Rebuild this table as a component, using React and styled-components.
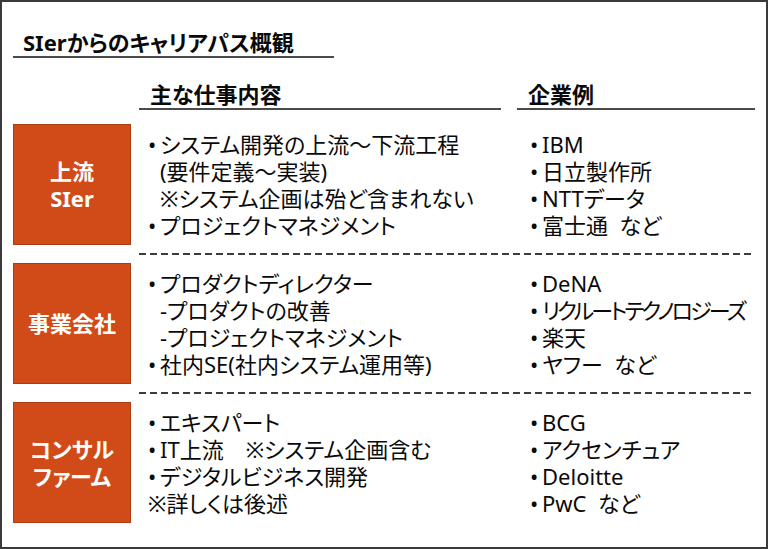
import React from 'react';
import styled, { createGlobalStyle } from 'styled-components';

const GlobalStyle = createGlobalStyle`
  html, body {
    margin: 0;
    padding: 0;
    background: #fff;
  }
  body {
    font-family: "Noto Sans", "Noto Sans CJK JP", sans-serif;
    color: #0a0a0a;
  }
`

const Frame = styled.div`
  width: 768px;
  height: 549px;
  box-sizing: border-box;
  border: 2px solid #3a3a3a;
  padding: 26px 0 0 11px;
  font-feature-settings: "palt";
`
const Title = styled.h1`
  margin: 0;
  width: 321px;
  box-sizing: border-box;
  padding-left: 10px;
  border-bottom: 2px solid #4a4a4a;
  font-size: 22px;
  font-weight: 700;
  line-height: 28px;
  white-space: nowrap;
`
const HeaderRow = styled.div`
  display: grid;
  grid-template-columns: 362px 238px;
  column-gap: 16px;
  margin: 23px 0 14px 126px;
`
const HeaderCell = styled.div`
  padding-left: 11px;
  border-bottom: 2px solid #4a4a4a;
  font-size: 22px;
  font-weight: 700;
  line-height: 27px;
`
const Row = styled.section`
  display: grid;
  grid-template-columns: 118px 362px 238px;
  column-gap: 8px;
  height: 121px;
  & > div:last-child {
    margin-left: 8px;
  }
`
const Label = styled.div`
  box-sizing: border-box;
  border: 1px solid #a93c12;
  background: #d14b18;
  color: #fff;
  display: flex;
  flex-direction: column;
  align-items: center;
  justify-content: center;
  text-align: center;
  font-size: 22px;
  font-weight: 700;
  line-height: 27px;
`
const List = styled.div`
  display: flex;
  flex-direction: column;
  justify-content: center;
  padding-left: ${p => p.$pad}px;
  font-size: 22px;
  line-height: 27px;
  white-space: pre;
`
const Line = styled.div`
  display: flex;
  padding-left: ${p => (p.$indent ? 12 : 0)}px;
  letter-spacing: ${p => (p.$tight ? '-2.8px' : '0')};
`
const Bullet = styled.span`
  width: 12px;
  flex: none;
  letter-spacing: 0;
`
const Divider = styled.div`
  height: 2px;
  width: 616px;
  margin: 8px 0 8px 126px;
  background: repeating-linear-gradient(to right, #3c3c3c 0 7px, transparent 7px 11px);
`

const rows = [
  {
    label: ['上流', 'SIer'],
    work: [
      { b: true, t: 'システム開発の上流～下流工程' },
      { i: true, t: '(要件定義～実装)' },
      { i: true, t: '※システム企画は殆ど含まれない' },
      { b: true, t: 'プロジェクトマネジメント' },
    ],
    companies: ['IBM', '日立製作所', 'NTTデータ', '富士通  など'],
  },
  {
    label: ['事業会社'],
    work: [
      { b: true, t: 'プロダクトディレクター' },
      { i: true, t: '-プロダクトの改善' },
      { i: true, t: '-プロジェクトマネジメント' },
      { b: true, t: '社内SE(社内システム運用等)' },
    ],
    companies: ['DeNA', 'リクルートテクノロジーズ', '楽天', 'ヤフー  など'],
  },
  {
    label: ['コンサル', 'ファーム'],
    work: [
      { b: true, t: 'エキスパート' },
      { b: true, t: 'IT上流　※システム企画含む' },
      { b: true, t: 'デジタルビジネス開発' },
      { t: '※詳しくは後述' },
    ],
    companies: ['BCG', 'アクセンチュア', 'Deloitte', 'PwC  など'],
  },
];

export default function App() {
  return (
    <>
      <GlobalStyle />
      <Frame>
        <Title>SIerからのキャリアパス概観</Title>
        <HeaderRow>
          <HeaderCell>主な仕事内容</HeaderCell>
          <HeaderCell>企業例</HeaderCell>
        </HeaderRow>
        {rows.map((row, idx) => (
          <React.Fragment key={idx}>
            {idx > 0 && <Divider />}
            <Row>
              <Label>
                {row.label.map(l => <div key={l}>{l}</div>)}
              </Label>
              <List $pad={9}>
                {row.work.map(w => (
                  <Line key={w.t} $indent={w.i}>
                    {w.b && <Bullet>•</Bullet>}
                    <span>{w.t}</span>
                  </Line>
                ))}
              </List>
              <List $pad={13}>
                {row.companies.map(c => (
                  <Line key={c} $tight={c.length > 10}>
                    <Bullet>•</Bullet>
                    <span>{c}</span>
                  </Line>
                ))}
              </List>
            </Row>
          </React.Fragment>
        ))}
      </Frame>
    </>
  );
}
